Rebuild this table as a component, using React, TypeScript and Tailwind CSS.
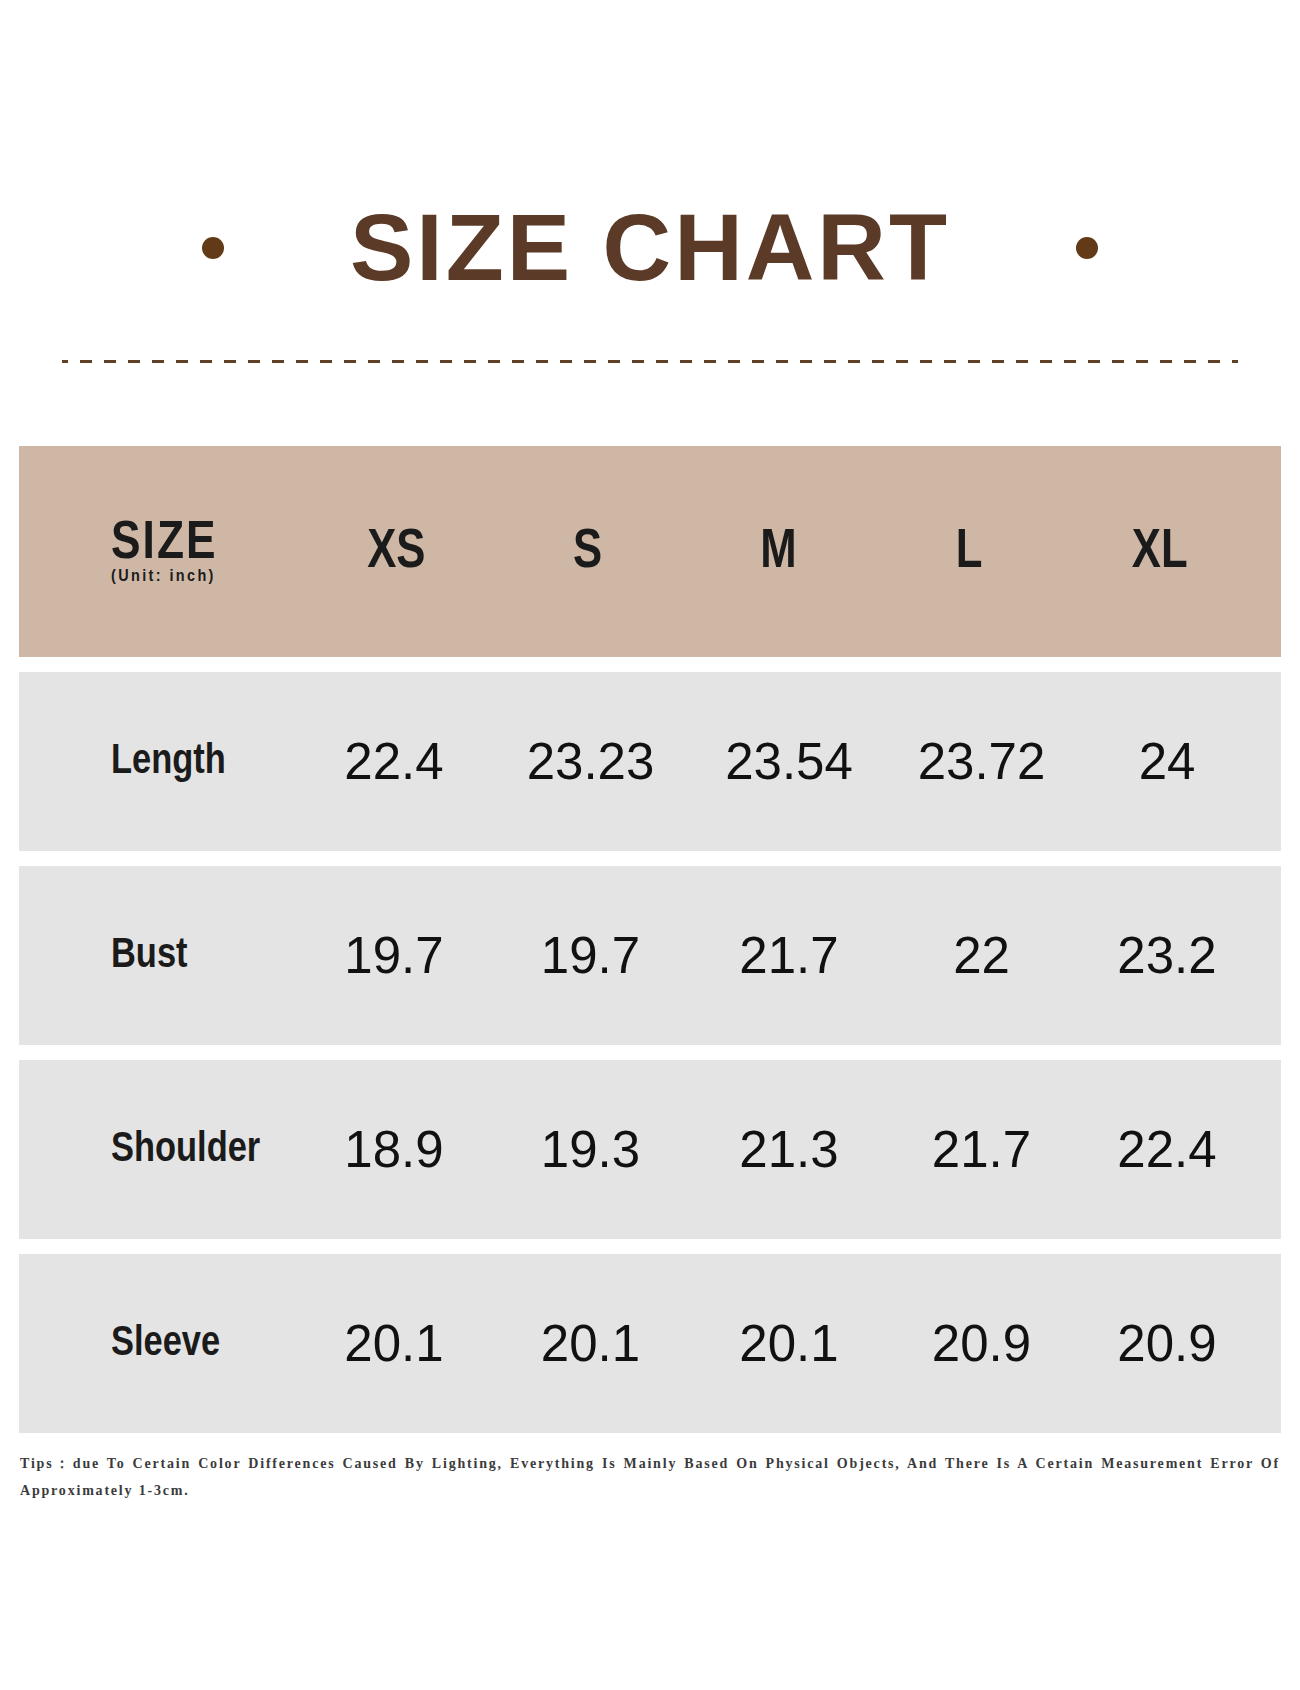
import React from 'react';

const sizes = ['XS', 'S', 'M', 'L', 'XL'];

const rows = [
  { label: 'Length', values: ['22.4', '23.23', '23.54', '23.72', '24'] },
  { label: 'Bust', values: ['19.7', '19.7', '21.7', '22', '23.2'] },
  { label: 'Shoulder', values: ['18.9', '19.3', '21.3', '21.7', '22.4'] },
  { label: 'Sleeve', values: ['20.1', '20.1', '20.1', '20.9', '20.9'] },
];

// narrow bold look: Arial-width bold squeezed horizontally
const narrow = "inline-block font-bold font-['Liberation_Sans',Arial,sans-serif]";

export default function App() {
  return (
    <div className="w-[1300px] h-[1690px] bg-white text-[#1b1b1b] font-['Liberation_Sans',Arial,sans-serif]">
      {/* title */}
      <div className="pt-[200px] flex items-center justify-center gap-[126px]">
        <span className="w-[22px] h-[22px] rounded-full bg-[#623a17]" />
        <h1 className="text-[95px] leading-none font-bold tracking-[3px] text-[#5b3a28]">SIZE CHART</h1>
        <span className="w-[22px] h-[22px] rounded-full bg-[#623a17]" />
      </div>

      <div className="mt-[65px] ml-[62px] w-[1176px] h-[3px] bg-[repeating-linear-gradient(to_right,#5e4126_0_12px,transparent_12px_24px)] bg-[position:-6px_0]" />

      {/* table */}
      <div className="mx-[19px] mt-[83px] flex flex-col gap-[15px]">
        <div className="h-[211px] bg-[#cfb7a5] grid grid-cols-[281px_192px_191px_191px_191px_190px] items-center">
          <div className="pl-[92px] flex flex-col items-start">
            <span className={`${narrow} origin-left scale-x-[0.82] text-[54px] leading-[44px] tracking-[2.5px]`}>SIZE</span>
            <span className={`${narrow} origin-left scale-x-[0.85] mt-[5px] text-[17px] leading-[20px] tracking-[2.8px]`}>(Unit: inch)</span>
          </div>
          {sizes.map((s) => (
            <div key={s} className="text-center pb-[7px]">
              <span className={`${narrow} scale-x-[0.78] text-[56px] leading-none`}>{s}</span>
            </div>
          ))}
        </div>

        {rows.map((r) => (
          <div
            key={r.label}
            className="h-[179px] bg-[#e4e4e4] grid grid-cols-[278px_194px_199px_198px_187px_184px] items-center"
          >
            <div className="pl-[92px] pb-[6px]">
              <span className={`${narrow} origin-left scale-x-[0.82] text-[42px] leading-none`}>{r.label}</span>
            </div>
            {r.values.map((v, i) => (
              <div key={i} className="text-center text-[51px] leading-none text-[#111]">
                {v}
              </div>
            ))}
          </div>
        ))}
      </div>

      {/* tips */}
      <div className="mx-[20px] mt-[17px] text-[14px] leading-[27px] font-bold tracking-[1.8px] text-[#3b3b3b] font-['Liberation_Serif','Times_New_Roman',serif]">
        <div className="text-justify [text-align-last:justify]">
          Tips：due To Certain Color Differences Caused By Lighting, Everything Is Mainly Based On Physical Objects, And There Is A Certain Measurement Error Of
        </div>
        <div>Approximately 1-3cm.</div>
      </div>
    </div>
  );
}
